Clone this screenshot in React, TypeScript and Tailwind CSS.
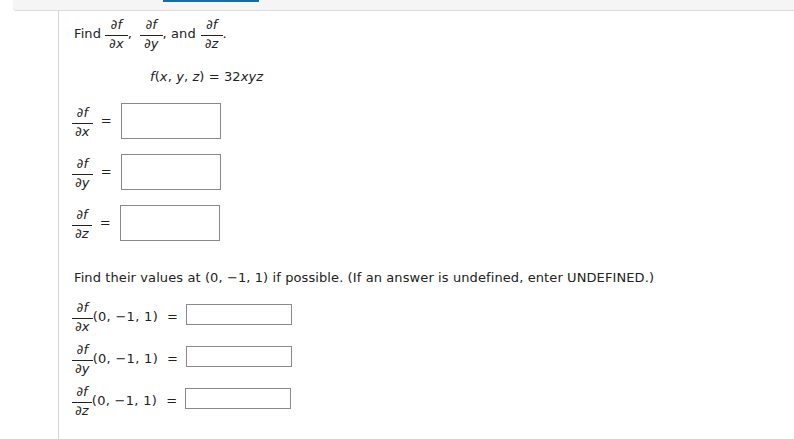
import React from "react";

const Frac = ({ num, den, px = "px-[3px]" }: { num: React.ReactNode; den: React.ReactNode; px?: string }) => (
  <span className="inline-flex flex-col items-center">
    <span className={`${px} pb-[3px] leading-[15px]`}>{num}</span>
    <span className="h-px w-full bg-[#222]" />
    <span className={`${px} leading-[15px]`}>{den}</span>
  </span>
);

const D = ({ v }: { v: string }) => (
  <>
    ∂<i>{v}</i>
  </>
);

const Box = ({ cls }: { cls: string }) => <span className={`block border border-[#8a8a8a] bg-white ${cls}`} />;

export default function App() {
  return (
    <div className="w-[794px] h-[439px] bg-white overflow-hidden font-['DejaVu_Sans',sans-serif] text-[13px] tracking-[0.1px] text-[#222]">
      <div className="ml-[13px] h-[11px] bg-[#f5f5f5] border-b border-[#dcdcdc] rounded-bl-[3px]">
        <div className="ml-[150px] w-[96px] h-[2px] bg-[#1d6aa3]" />
      </div>
      <div className="ml-[58px] border-l border-[#d4d4d4] h-[428px] pl-[15px]">
        <div className="flex items-center h-[46px]">
          <span className="mr-[4px]">Find</span>
          <Frac px="px-[4px]" num={<D v="f" />} den={<D v="x" />} />
          <span className="mr-[8px]">,</span>
          <Frac px="px-[4px]" num={<D v="f" />} den={<D v="y" />} />
          <span className="mr-[5px]">, and</span>
          <Frac px="px-[4px]" num={<D v="f" />} den={<D v="z" />} />
          <span>.</span>
        </div>
        <div className="ml-[76px] mt-[12px] leading-[15px]">
          <i>f</i>(<i>x</i>, <i>y</i>, <i>z</i>) = 32<i>xyz</i>
        </div>
        <div className="mt-[19px] flex flex-col gap-[15px]">
          {["x", "y", "z"].map((v) => (
            <div key={v} className="flex items-center h-[36px]">
              <span className="-ml-[2px]">
                <Frac num={<D v="f" />} den={<D v={v} />} />
              </span>
              <span className="ml-[8px]">=</span>
              <Box cls="ml-[9px] w-[100px] h-[36px]" />
            </div>
          ))}
        </div>
        <div className="mt-[29px] leading-[15px]">
          Find their values at (0, −1, 1) if possible. (If an answer is undefined, enter UNDEFINED.)
        </div>
        <div className="mt-[10px] flex flex-col">
          {["x", "y", "z"].map((v) => (
            <div key={v} className="flex items-center h-[42px]">
              <span className="-ml-[2px]">
                <Frac num={<D v="f" />} den={<D v={v} />} />
              </span>
              <span className="mt-[2px] tracking-[0.3px]">(0, −1, 1)</span>
              <span className="ml-[9px] mt-[2px]">=</span>
              <Box cls="ml-[8px] w-[106px] h-[21px] -mt-[3px]" />
            </div>
          ))}
        </div>
      </div>
    </div>
  );
}
